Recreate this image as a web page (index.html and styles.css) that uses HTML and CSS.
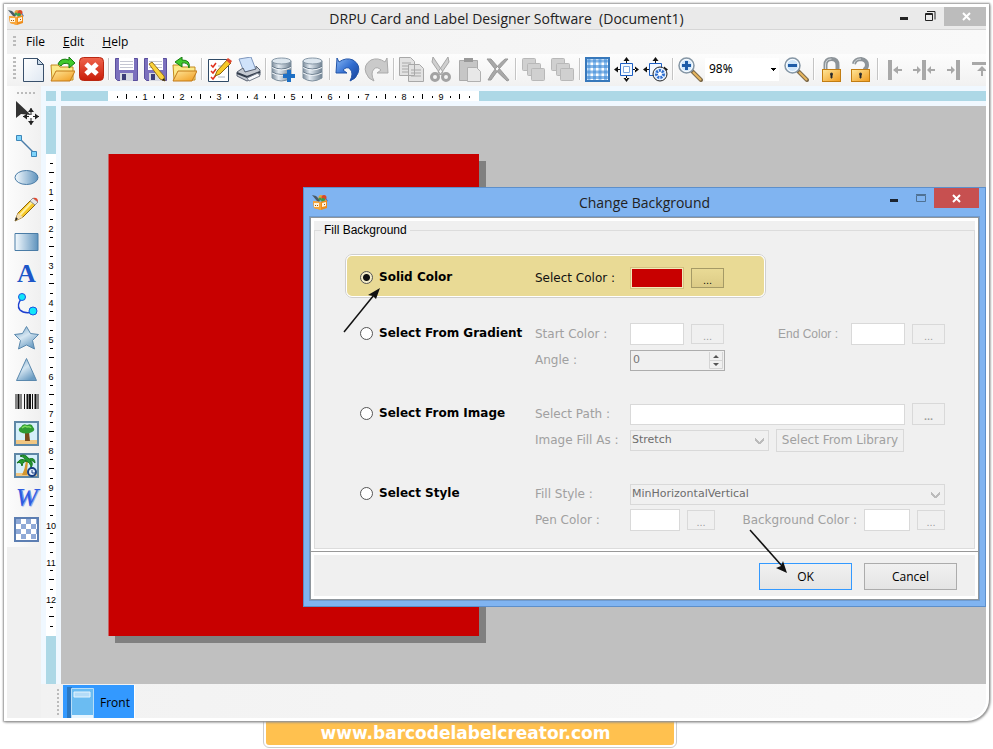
FILE: index.html
```html
<!DOCTYPE html>
<html lang="en">
<head>
<meta charset="utf-8">
<title>DRPU Card and Label Designer Software</title>
<link rel="stylesheet" href="styles.css">
</head>
<body>
<svg class="defs" width="0" height="0" aria-hidden="true">
  <defs>
    <linearGradient id="steel" x1="0" x2="1"><stop offset="0" stop-color="#f4fafe"/><stop offset="1" stop-color="#5f93bd"/></linearGradient>
    <linearGradient id="steelDown" x1="0" x2="0.6" y1="0" y2="1"><stop offset="0" stop-color="#6f9fc4"/><stop offset=".5" stop-color="#d5e6f2"/><stop offset="1" stop-color="#6b9cc2"/></linearGradient>
    <linearGradient id="gold" x1="0" x2="1" y1="0" y2="1"><stop offset="0" stop-color="#ffe79a"/><stop offset="1" stop-color="#f09a1c"/></linearGradient>
    <linearGradient id="red" x1="0" x2="0" y1="0" y2="1"><stop offset="0" stop-color="#f0644c"/><stop offset="1" stop-color="#c81c08"/></linearGradient>
    <linearGradient id="blue" x1="0" x2="1" y1="0" y2="1"><stop offset="0" stop-color="#8ab8f4"/><stop offset=".5" stop-color="#2f6cd0"/><stop offset="1" stop-color="#173f93"/></linearGradient>
    <linearGradient id="paper" x1="0" x2="1" y1="0" y2="1"><stop offset="0" stop-color="#fff"/><stop offset="1" stop-color="#dfe8f2"/></linearGradient>
    <linearGradient id="drum" x1="0" x2="1"><stop offset="0" stop-color="#7d8d9c"/><stop offset=".35" stop-color="#e3ebf2"/><stop offset="1" stop-color="#6f8192"/></linearGradient>
    <symbol id="app" viewBox="0 0 16 16">
      <path d="M0 1l4 1 4 4-1 2-2-1z" fill="#4a5a66"/><circle cx="9" cy="3.500" r="2.500" fill="#e8a13a"/><circle cx="8" cy="5" r="1.500" fill="#3f9c4c"/><circle cx="12" cy="3.500" r="2.500" fill="#d94a26"/><circle cx="11" cy="6" r="2" fill="#35a050"/><path d="M14 4l2 3-2 1z" fill="#3f78d0"/>
      <path d="M1 7l7 1 7-2v8l-6 2-7-2z" fill="#ee8d1d"/><path d="M1 7l8 1v8l-7-2z" fill="#f9a63a"/><path d="M2 9h5v4H2zM10 9l4-1v4l-4 1z" fill="#fff3dc"/><path d="M3 11h1v1H3zM5 11h1v1H5zM12 10h1v1h-1z" fill="#a35a12"/>
    </symbol>
    <symbol id="floppy" viewBox="0 0 25 25">
      <path d="M1.500 1.500h22v22h-20l-2-2z" fill="#7b70bd" stroke="#5a4f9d"/><path d="M5 1h15v12H5z" fill="#fff"/><path d="M6 4.500h13M6 7.500h13M6 10.500h13" stroke="#c4c6d2"/><path d="M6 16h13v8H6z" fill="#d7d9e2"/><path d="M8 17h4v6H8z" fill="#3c3c78"/>
    </symbol>
    <symbol id="folder" viewBox="0 0 25 25">
      <path d="M1 8h7l2 2h13v13H2z" fill="#fbe98a" stroke="#c48a1d"/><path d="M1 24l5-10h19l-5 10z" fill="url(#gold)" stroke="#c27a18"/>
    </symbol>
    <symbol id="pencil" viewBox="0 0 25 25">
      <path d="M1 24l3-8 14-14 5 4-14 14z" fill="#f7c928" stroke="#8a6412"/><path d="M6 18L19 4" stroke="#fff0a0" stroke-width="2"/><path d="M16 4l3-3 5 4-3 3z" fill="#e6e6e6" stroke="#8f8f8f"/><path d="M19 1q5-1 5 4z" fill="#e0472e"/><path d="M1 24l3-8 5 4z" fill="#f3ddb0"/><path d="M1 24l1-4 2 2z" fill="#222"/>
    </symbol>
    <symbol id="drumstack" viewBox="0 0 25 25">
      <path d="M3 4v17q9 6 19 0V4z" fill="url(#drum)" stroke="#7d8e9d"/><ellipse cx="12.500" cy="4" rx="9.500" ry="3" fill="#dce6ee" stroke="#8798a7"/><path d="M3 9.500q9 5 19 0M3 15q9 5 19 0" fill="none" stroke="#66798a"/><path d="M3 10.500q9 5 19 0M3 16q9 5 19 0" fill="none" stroke="#eef3f7"/>
    </symbol>
    <symbol id="stack" viewBox="0 0 25 25">
      <g fill="#d0d0d0" stroke="#b8b8b8"><rect x="1.500" y="1.500" width="13" height="12" rx="1"/><rect x="6.500" y="6.500" width="13" height="12" rx="1"/><rect x="10.500" y="11.500" width="13" height="12" rx="1"/></g>
    </symbol>
    <symbol id="lens" viewBox="0 0 25 25">
      <path d="M14 14l9 9" stroke="#7d6a4a" stroke-width="4" stroke-linecap="round"/><path d="M15 15l8 8" stroke="#e8b75e" stroke-width="2"/><circle cx="8.500" cy="8.500" r="7.500" fill="#cfe6fa" stroke="#8797a5" stroke-width="1.500"/><circle cx="8.500" cy="8.500" r="6" fill="none" stroke="#fff"/>
    </symbol>
    <symbol id="lockbody" viewBox="0 0 25 25">
      <rect x="3.500" y="12.500" width="18" height="12" fill="url(#gold)" stroke="#c27d12"/><circle cx="12.500" cy="17" r="1.500" fill="#333"/><path d="M12 17h1v4h-1z" stroke="#333"/>
    </symbol>
  </defs>
</svg>

<main class="window">
  <header class="titlebar">
    <svg class="app-icon" width="16" height="16"><use href="#app"/></svg>
    <h1>DRPU Card and Label Designer Software&nbsp; (Document1)</h1>
    <div class="window-controls">
      <button aria-label="Minimize"><svg width="24" height="19"><path d="M8 10h8v3H8z" fill="#222"/></svg></button>
      <button aria-label="Restore"><svg width="28" height="19"><path d="M9.500 6.500h7v7h-7zM9 7.500h8M11 4.500h8v8" fill="none" stroke="#222"/></svg></button>
      <button class="close" aria-label="Close"><svg width="42" height="19"><path d="M19 6l7 7M26 6l-7 7" stroke="#fff" stroke-width="2"/></svg></button>
    </div>
  </header>

  <nav class="menubar">
    <span class="grip"></span>
    <button>File</button><button><u>E</u>dit</button><button><u>H</u>elp</button>
  </nav>

  <div class="toolbar">
    <span class="grip"></span>
    <button aria-label="New"><svg><path d="M2.500 1.500h14l6 6v17h-20z" fill="url(#paper)" stroke="#39506b"/><path d="M16.500 1.500v6h6z" fill="#c8d8e8" stroke="#39506b"/></svg></button>
    <button aria-label="Open"><svg><use href="#folder"/><path d="M8 7q3-7 11-4V0l6 6-6 5V7q-6-2-8 2z" fill="#3fc92c" stroke="#187c12"/></svg></button>
    <button aria-label="Close document"><svg><rect x=".5" y=".5" width="24" height="23" rx="4" fill="url(#red)" stroke="#b92812"/><path d="M7 7l11 10M18 7L7 17" stroke="#fff" stroke-width="5"/></svg></button>
    <i class="sep"></i>
    <button aria-label="Save"><svg><use href="#floppy"/></svg></button>
    <button aria-label="Save as"><svg><use href="#floppy"/><path d="M6 7l3-2 12 14 1 5-5-2z" fill="#fbd33c" stroke="#94701a"/><path d="M22 24l-3-1 2-2z" fill="#222"/></svg></button>
    <button aria-label="Import"><svg><use href="#folder"/><path d="M17 11q-1-6-7-5v4L3 5l7-5v3q9 0 7 8z" fill="#3fc92c" stroke="#187c12"/></svg></button>
    <i class="sep"></i>
    <button aria-label="Properties"><svg><path d="M1.500 2.500h20v22h-20z" fill="#fff" stroke="#2f4a66"/><path d="M4 8l2 2 3-4M4 14l2 2 3-4M4 20l2 2 3-4" fill="none" stroke="#e0301c" stroke-width="1.500"/><path d="M11 9h7M11 20h7" stroke="#aab8c6"/><path d="M8 19l2-5L20 3l4 3-11 11z" fill="#f7c928" stroke="#8a6412"/><path d="M19 3l2-2 4 3-2 3z" fill="#e0472e"/></svg></button>
    <button aria-label="Print"><svg><path d="M3 2l12-2 5 13-12 2z" fill="#cfe2fa" stroke="#7d96bd"/><path d="M1 15l6-4 2 4 11-3v-3l4 4v5l-13 6-10-5z" fill="#c4c9d1" stroke="#596272"/><path d="M1 16l10 4 13-5" fill="none" stroke="#333d4c" stroke-width="2"/><path d="M11 21l11-5 2 3-11 5z" fill="#f6f8fb" stroke="#737c8a"/></svg></button>
    <i class="sep"></i>
    <button aria-label="Add data source"><svg><use href="#drumstack" x="-2"/><path d="M18 13v12M12 19h12" stroke="#1d6fc4" stroke-width="4"/></svg></button>
    <button aria-label="Data source"><svg><use href="#drumstack"/></svg></button>
    <i class="sep"></i>
    <button aria-label="Undo"><svg><path d="M2 1l2 4q7-5 14-2 8 5 5 13-2 6-8 8 4-8 0-12-3-3-7 1l4 3H1z" fill="url(#blue)" stroke="#2355a8"/></svg></button>
    <button aria-label="Redo" disabled><svg><path d="M23 1l-2 4q-7-5-14-2-8 5-5 13 2 6 8 8-4-8 0-12 3-3 7 1l-4 3h11z" fill="#cacaca" stroke="#aaa"/></svg></button>
    <i class="sep"></i>
    <button aria-label="Copy" disabled><svg><g fill="#e2e2e2" stroke="#a8a8a8"><path d="M.5.500h11l4 4v14H.5zM9.500 7.500h11l4 4v13h-15z"/><path d="M3 6h9M3 9h6M3 12h6M3 15h6M12 13h10M12 16h10M12 19h10"/></g></svg></button>
    <button aria-label="Cut" disabled><svg><path d="M5 0l10 15-2 3L4 5zM20 0L10 15l2 3 9-13z" fill="#cfcfcf" stroke="#a6a6a6"/><g fill="none" stroke="#a3a3a3" stroke-width="3"><circle cx="7" cy="20" r="3.500"/><circle cx="18" cy="20" r="3.500"/></g></svg></button>
    <button aria-label="Paste" disabled><svg><path d="M2.500 3.500h18v20h-18z" fill="#c6c6c6" stroke="#aaa"/><path d="M7 1h9v4H7z" fill="#999"/><path d="M10.500 10.500h9l4 4v10h-13z" fill="#e8e8e8" stroke="#b0b0b0"/></svg></button>
    <button aria-label="Delete" disabled><svg><path d="M1 2h4q8 9 18 21l-2 1Q11 16 1 2zM22 2h-3Q9 10 2 23h3Q12 12 22 2z" fill="#a8a8a8" stroke="#999"/></svg></button>
    <i class="sep"></i>
    <button aria-label="Bring to front" disabled><svg><use href="#stack"/></svg></button>
    <button aria-label="Send to back" disabled><svg><use href="#stack"/></svg></button>
    <i class="sep"></i>
    <button aria-label="Grid"><svg><path d="M1 1h23v23H1z" fill="#fff" stroke="#3978bb" stroke-width="2"/><path d="M4 2v21M9.500 2v21M15 2v21M20.500 2v21" stroke="#4d9be6" stroke-width="3" opacity=".6"/><path d="M2 4h21M2 9.500h21M2 15h21M2 20.500h21" stroke="#3a86d4" stroke-width="3" opacity=".6"/></svg></button>
    <button aria-label="Center"><svg><path d="M6.500 6.500h12v12h-12z" fill="#f4f9ff" stroke="#1d5fc4"/><path d="M9.500 9.500h6v6h-6z" fill="#fff" stroke="#7aa7e0"/><path d="M12.500 0l3 4h-6zM12.500 25l3-4h-6zM0 12.500l4-3v6zM25 12.500l-4-3v6zM12 3h1v3h-1zM12 19h1v3h-1zM3 12h3v1H3zM19 12h3v1h-3z" fill="#111"/></svg></button>
    <button aria-label="Center settings"><svg><path d="M6.500 6.500h12v12h-12z" fill="#f4f9ff" stroke="#1d5fc4"/><path d="M12.500 0l3 4h-6zM0 12.500l4-3v6zM25 12.500l-4-3v6zM12 3h1v3h-1zM3 12h3v1H3z" fill="#111"/><circle cx="17" cy="17" r="7" fill="#e4f0ff" stroke="#222"/><circle cx="17" cy="17" r="3.500" fill="#fff" stroke="#2d6ed0" stroke-width="3" stroke-dasharray="2 1"/></svg></button>
    <i class="sep"></i>
    <button aria-label="Zoom in"><svg><use href="#lens"/><path d="M8.500 4v9M4 8.500h9" stroke="#1e5ca8" stroke-width="3"/></svg></button>
    <select class="zoom" aria-label="Zoom"><option>98%</option></select>
    <button aria-label="Zoom out"><svg><use href="#lens"/><path d="M4 8.500h9" stroke="#1e5ca8" stroke-width="3"/></svg></button>
    <i class="sep"></i>
    <button aria-label="Lock"><svg><path d="M6.500 13V8q0-6 6-6t6 6v5" fill="none" stroke="#8d9499" stroke-width="4"/><path d="M6.500 13V8q0-6 6-6" fill="none" stroke="#d5dadd"/><use href="#lockbody"/></svg></button>
    <button aria-label="Unlock"><svg><path d="M6 7q1-5 7-5 6 1 6 6 0 3-3 5" fill="none" stroke="#8d9499" stroke-width="4"/><path d="M6 7q1-5 7-5" fill="none" stroke="#d5dadd"/><use href="#lockbody"/></svg></button>
    <i class="sep"></i>
    <button aria-label="Align left" disabled><svg><path d="M5 3h4v20H5zM10 13l5-4v3h4v2h-4v3z" fill="#a8a8a8"/></svg></button>
    <button aria-label="Align center" disabled><svg><path d="M10 3h4v20h-4zM9 13L5 9v3H1v2h4v3zM15 13l4-4v3h4v2h-4v3z" fill="#a8a8a8"/></svg></button>
    <button aria-label="Align right" disabled><svg><path d="M15 3h4v20h-4zM14 13l-4-4v3H6v2h4v3z" fill="#a8a8a8"/></svg></button>
    <button aria-label="Align top" disabled><svg><path d="M2 5h20v3H2zM12 9l-5 5h4v5h2v-5h4z" fill="#a8a8a8"/></svg></button>
  </div>

  <div class="workspace">
    <aside class="tools">
      <span class="grip-h"></span>
      <button aria-label="Select"><svg><path d="M2 0v17l5-4 10 1z" fill="#333"/><path d="M17 7v17M9 15.500h16" stroke="#222"/><path d="M17 7l3 4h-6zM17 24l3-4h-6zM9 15.500l4-3v6zM25 15.500l-4-3v6z" fill="#222"/><path d="M15 14h4v3h-4z" fill="#fff"/></svg></button>
      <button aria-label="Line"><svg><path d="M5 5l16 16" stroke="#4b7ca8" stroke-width="1.500"/><path d="M2.500 2.500h5v5h-5zM17.500 18.500h5v5h-5z" fill="#7fd4fb" stroke="#3d86b8"/></svg></button>
      <button aria-label="Ellipse"><svg><ellipse cx="12.500" cy="12.500" rx="11.500" ry="7" fill="url(#steel)" stroke="#4a7ca6"/></svg></button>
      <button aria-label="Pencil"><svg><use href="#pencil"/></svg></button>
      <button aria-label="Rectangle"><svg><path d="M1 4.500h23v17H1z" fill="url(#steel)" stroke="#4a7ca6"/></svg></button>
      <button class="glyph" aria-label="Text">A</button>
      <button aria-label="Curve"><svg><path d="M8 5q-6 7-2 12 4 4 13 2" fill="none" stroke="#1d3fd0" stroke-width="1.500"/><circle cx="8" cy="4" r="3.500" fill="#12e6f8" stroke="#1a54e0"/><circle cx="19" cy="18" r="4" fill="#12e6f8" stroke="#1a54e0"/></svg></button>
      <button aria-label="Star"><svg><path d="M12.500 1.500l4 7 8 1-6 6 2 8.500-8-4-8 4 2-8.500-6-6 8-1z" fill="url(#steelDown)" stroke="#5a88ad"/></svg></button>
      <button aria-label="Triangle"><svg><path d="M12.500 1.500l10 22h-20z" fill="url(#steelDown)" stroke="#5a88ad"/></svg></button>
      <button aria-label="Barcode"><svg><path d="M2 5v15M7 5v15M10.500 5v15M18.500 5v15M24 5v15" stroke="#111"/><path d="M4.500 5v15M13.500 5v15M16 5v15M21.500 5v15" stroke="#111" stroke-width="2"/></svg></button>
      <button aria-label="Picture"><svg><path d="M1 1h23v23H1z" fill="#d5effa" stroke="#5e87a6" stroke-width="2"/><path d="M2 19h21v4H2z" fill="#f0c682"/><path d="M11 11h4l1 9h-5z" fill="#7a4a1c"/><path d="M6 11q-3-3 1-5 2-4 6-2 5-2 6 2 3 3-1 5-6 3-12 0z" fill="#2e9a34"/><path d="M8 7q3-3 5-1 3-1 4 1" fill="none" stroke="#7ddc5c" stroke-width="1.500"/></svg></button>
      <button aria-label="Picture library"><svg><path d="M1 1h23v23H1z" fill="#d5effa" stroke="#5e87a6" stroke-width="2"/><path d="M2 20h21v3H2z" fill="#f0c682"/><path d="M12 8q-1 8-4 14h5q0-6 1-14z" fill="#d4962e"/><path d="M12 8Q7 4 3 10q4-2 5 3 0-4 4-5 5 2 5 7 3-6-1-7 3-1 5 2 0-6-6-4-4-6-9-3 4 0 6 5z" fill="#249a2e" stroke="#14721e"/><circle cx="18" cy="19" r="4" fill="#e8f1ff" stroke="#173d82" stroke-width="2"/><path d="M18 17v3h3" fill="none" stroke="#173d82"/></svg></button>
      <button class="glyph glyph-art" aria-label="Word art">W</button>
      <button aria-label="Watermark"><svg><path d="M1 1h23v23H1z" fill="#fff" stroke="#5c7eb2" stroke-width="2"/><path d="M2 4.500h21M2 14.500h21" stroke="#8fa9d6" stroke-width="5" stroke-dasharray="5"/><path d="M7 9.500h16M7 19.500h16" stroke="#8fa9d6" stroke-width="5" stroke-dasharray="5"/></svg></button>
    </aside>

    <span class="ruler-corner"></span>
    <div class="ruler ruler-x">
      <span class="ruler-lead"></span>
      <svg width="371" height="10">
        <pattern id="tx" width="37" height="10" patternUnits="userSpaceOnUse"><path d="M9 5h1v2H9zM18 3h1v5h-1zM28 5h1v2h-1z"/></pattern>
        <rect width="371" height="10" fill="url(#tx)"/>
        <g text-anchor="middle"><text x="37" y="9">1</text><text x="74" y="9">2</text><text x="111" y="9">3</text><text x="148" y="9">4</text><text x="185" y="9">5</text><text x="222" y="9">6</text><text x="259" y="9">7</text><text x="296" y="9">8</text><text x="333" y="9">9</text></g>
      </svg>
      <span class="ruler-rest"></span>
    </div>
    <div class="ruler ruler-y">
      <span class="ruler-lead"></span>
      <svg width="10" height="482">
        <pattern id="ty" width="10" height="37" patternUnits="userSpaceOnUse"><path d="M4 9h3v1H4zM3 18h5v1H3zM4 28h3v1H4z"/></pattern>
        <rect width="10" height="482" fill="url(#ty)"/>
        <g text-anchor="middle"><text x="5" y="41">1</text><text x="5" y="78">2</text><text x="5" y="115">3</text><text x="5" y="152">4</text><text x="5" y="189">5</text><text x="5" y="226">6</text><text x="5" y="263">7</text><text x="5" y="300">8</text><text x="5" y="337">9</text><text x="5" y="375">10</text><text x="5" y="412">11</text><text x="5" y="449">12</text></g>
      </svg>
      <span class="ruler-rest"></span>
    </div>

    <section class="canvas">
      <div class="artboard"></div>

      <form class="dialog" role="dialog" aria-labelledby="dialog-title">
        <header class="dialog-title">
          <svg class="app-icon" width="16" height="16"><use href="#app"/></svg>
          <h2 id="dialog-title">Change Background</h2>
          <div class="window-controls">
            <button type="button" aria-label="Minimize"><svg width="24" height="20"><path d="M8 11h8v3H8z" fill="#1c2430"/></svg></button>
            <button type="button" aria-label="Maximize"><svg width="28" height="20"><path d="M10.500 7.500h9v6h-9zM10 6.500h10" fill="none" stroke="#4f7193"/></svg></button>
            <button type="button" class="close close-red" aria-label="Close"><svg width="45" height="20"><path d="M19 7l7 7M26 7l-7 7" stroke="#fff" stroke-width="2"/></svg></button>
          </div>
        </header>
        <div class="client">
          <div class="sheet">
          <fieldset class="panel">
            <legend>Fill Background</legend>

            <div class="option option-active">
              <label class="choice"><input type="radio" name="fill" checked>Solid Color</label>
              <div class="fields">
                <div class="field">
                  <label for="solid">Select Color :</label>
                  <input id="solid" class="swatch swatch-red" readonly>
                  <button type="button" class="more">...</button>
                </div>
              </div>
            </div>

            <div class="option">
              <label class="choice"><input type="radio" name="fill">Select From Gradient</label>
              <div class="fields">
                <div class="field">
                  <label for="start">Start Color :</label>
                  <input id="start" class="swatch" disabled>
                  <button type="button" class="more" disabled>...</button>
                  <label for="end" class="second sans">End Color :</label>
                  <input id="end" class="swatch" disabled>
                  <button type="button" class="more" disabled>...</button>
                </div>
                <div class="field">
                  <label for="angle">Angle :</label>
                  <span class="spinner">
                    <input id="angle" value="0" disabled>
                    <svg width="14" height="17"><path d="M.5 0v16.500h13V0M0 8.500h14" fill="none" stroke="#d4d4d4"/><path d="M4 6l3-3 3 3zM4 11l3 3 3-3z" fill="#555"/></svg>
                  </span>
                </div>
              </div>
            </div>

            <div class="option">
              <label class="choice"><input type="radio" name="fill">Select From Image</label>
              <div class="fields">
                <div class="field">
                  <label for="path">Select Path :</label>
                  <input id="path" class="path" disabled>
                  <button type="button" class="more more-bold" disabled>...</button>
                </div>
                <div class="field">
                  <label for="fillas">Image Fill As :</label>
                  <select id="fillas" class="short" disabled><option>Stretch</option></select>
                  <button type="button" class="library" disabled>Select From Library</button>
                </div>
              </div>
            </div>

            <div class="option">
              <label class="choice"><input type="radio" name="fill">Select Style</label>
              <div class="fields">
                <div class="field">
                  <label for="style">Fill Style :</label>
                  <select id="style" disabled><option>MinHorizontalVertical</option></select>
                </div>
                <div class="field">
                  <label for="pen">Pen Color :</label>
                  <input id="pen" class="swatch swatch-pen" disabled>
                  <button type="button" class="more more-small" disabled>...</button>
                  <label for="back" class="second">Background Color :</label>
                  <input id="back" class="swatch swatch-small" disabled>
                  <button type="button" class="more more-small" disabled>...</button>
                </div>
              </div>
            </div>
          </fieldset>
          </div>
          <footer class="actions">
            <button type="submit" class="primary">OK</button>
            <button type="button">Cancel</button>
          </footer>
        </div>
        <svg class="pointer pointer-solid" width="40" height="48"><path d="M2 46L32 9" stroke="#111" stroke-width="1.500"/><path d="M38 2l-4 11-3-3-5-1z" fill="#111"/></svg>
        <svg class="pointer pointer-ok" width="42" height="48"><path d="M2 2l32 36" stroke="#111" stroke-width="1.500"/><path d="M39 45l-11-5 5-2 2-5z" fill="#111"/></svg>
      </form>
    </section>

    <footer class="pages">
      <span class="grip"></span>
      <button class="page-tab">
        <svg width="28" height="31"><path d="M0 0h5v31H0z" fill="#2b78c2"/><path d="M4.500 1.500h22v30h-22z" fill="#6bbcf2" stroke="#b8def8"/><path d="M7 5h16v5H7z" fill="#b4dcf8" stroke="#e4f3fd"/><path d="M5 28h21v3H5z" fill="#e8f5fe"/></svg>
        Front
      </button>
    </footer>
  </div>
</main>
<a class="banner" href="http://www.barcodelabelcreator.com">www.barcodelabelcreator.com</a>
</body>
</html>
```
FILE: styles.css
```css
* { box-sizing: border-box; }

body {
  margin: 0;
  min-height: 100vh;
  display: flex;
  flex-direction: column;
  background: #fff;
  font: 12px/16px "Open Sans", "Noto Sans", sans-serif;
  color: #000;
}

h1, h2 { margin: 0; font-weight: 400; text-align: center; }
button, input, select { font: inherit; color: inherit; margin: 0; padding: 0; border: 0; border-radius: 0; background: none; }
svg { display: block; flex: none; }
.defs { position: absolute; }

.window {
  flex: 1;
  display: flex;
  flex-direction: column;
  margin: 4px 4px 0;
  border: 3px solid #fff;
  border-bottom-right-radius: 22px;
  box-shadow: 0 0 2px 1px #999, 1px 1px 3px #888;
  background: #f0f0f0;
  overflow: hidden;
  position: relative;
  z-index: 1;
}

.titlebar {
  display: grid;
  grid-template-columns: 116px 1fr 96px;
  height: 23px;
  background: #eaeaea;
  border-bottom: 1px solid #d6d6d6;
}
.titlebar h1 { font-size: 14px; line-height: 23px; color: #222; white-space: nowrap; }
.app-icon { margin: 2px 1px; }
.window-controls { display: flex; justify-content: flex-end; align-items: flex-start; }
.close { background: #bcbcbc; }
.close-red { background: #c75050; }

.grip { width: 3px; height: 18px; background: repeating-linear-gradient(#bbb 0 2px, transparent 2px 4px); flex: none; }
.grip-h { width: 19px; height: 2px; margin: 6px 0 4px; background: repeating-linear-gradient(90deg, #bbb 0 2px, transparent 2px 4px); flex: none; }

.menubar {
  display: flex;
  align-items: center;
  height: 24px;
  padding-left: 6px;
  background: linear-gradient(90deg, #f1f1f1, #f9f9f9);
}
.menubar .grip { height: 12px; }
.menubar button { padding: 0 9px; }
.menubar .grip + button { padding-left: 10px; }

.toolbar {
  display: flex;
  align-items: center;
  height: 32px;
  padding: 0 0 2px 6px;
  overflow: hidden;
  background: linear-gradient(#fdfdfd, #f1f1f1);
}
.toolbar .grip { height: 24px; margin-right: 3px; }
.toolbar button { flex: none; width: 29px; height: 25px; padding: 0 2px; }
.toolbar svg { width: 25px; height: 25px; }
.sep { flex: none; width: 2px; height: 22px; margin: 0 2px; border-left: 1px solid #c4c4c4; border-right: 1px solid #fff; }
.zoom {
  flex: none;
  appearance: none;
  width: 74px;
  height: 23px;
  margin-right: 3px;
  padding-left: 4px;
  font-family: "Noto Sans", sans-serif;
  background: linear-gradient(#000, #000) no-repeat right 5px top 12px / 1px 1px, linear-gradient(#000, #000) no-repeat right 4px top 11px / 3px 1px, linear-gradient(#000, #000) no-repeat right 3px top 10px / 5px 1px, #fff;
}

.workspace {
  flex: 1;
  display: grid;
  grid-template-columns: 34px 20px 1fr;
  grid-template-rows: 20px 1fr 34px;
  background: #f0f8ff;
}
.tools {
  grid-row: 1 / 4;
  display: flex;
  flex-direction: column;
  align-items: center;
  padding-right: 1px;
  padding-left: 6px;
  background: linear-gradient(90deg, #fcfcfc, #f0f0f0) no-repeat top / 100% 461px, #f0f0f0;
}
.tools button { width: 25px; height: 32px; padding: 3px 0 4px; flex: none; }
.tools svg { width: 25px; height: 25px; }
.tools .glyph { padding: 0; font: bold 26px/32px "Liberation Serif", serif; color: #1c56c8; }
.tools .glyph-art { font-style: italic; font-weight: 400; color: #2f5be0; text-shadow: 1px 1px 1px #9fb4f0, 1px 0 0 #2f5be0; }

.ruler-corner { margin: 5px; background: #add8e6; }
.ruler { display: flex; font: 9px "Liberation Sans", sans-serif; }
.ruler svg { background: #fff; overflow: visible; }
.ruler-lead, .ruler-rest { background: #add8e6; }
.ruler-rest { flex: 1; }
.ruler-x { padding: 5px 0; }
.ruler-x .ruler-lead { width: 47px; }
.ruler-y { flex-direction: column; padding: 0 5px; }
.ruler-y .ruler-lead { height: 48px; }

.canvas { position: relative; padding: 48px 47px; background: #c0c0c0; }
.artboard { width: 371px; height: 482px; background: #c80000; border-left: 1px solid #c86464; box-shadow: 7px 7px 0 #808080; }

.pages {
  grid-column: 2 / 4;
  display: flex;
  align-items: flex-start;
  padding: 1px 0 0 16px;
  background: linear-gradient(90deg, #f2f2f2, #f8f8f8);
}
.pages .grip { height: 26px; margin: 4px 4px 0 0; width: 2px; }
.page-tab { display: flex; align-items: center; gap: 5px; height: 33px; padding: 2px 4px 0 4px; background: #39f; border-right: 1px solid #fff; }

.dialog {
  position: absolute;
  top: 81px;
  left: 242px;
  right: 0;
  padding: 0 6px 6px;
  border: 1px solid #5d8fca;
  background: #80b4f1;
}
.dialog-title { display: grid; grid-template-columns: 97px 1fr 97px; height: 29px; }
.dialog-title h2 { font-size: 14px; line-height: 29px; color: #222; }
.dialog-title .app-icon { margin: 6px 2px; }

.client { border: 1px solid #8f969c; outline: 1px solid #6f9bd0; background: #fff; padding-top: 3px; }
.sheet { margin: 0 3px; padding-top: 1px; background: #f0f0f0; }
.panel {
  min-width: 0;
  margin: 0;
  padding: 0 29px 17px 30px;
  border: 1px solid #dcdcdc;
}
.panel legend { margin-left: -24px; padding: 0 3px; font: 12px/16px "Liberation Sans", sans-serif; }

.option {
  display: grid;
  grid-template-columns: 175px 1fr;
  align-items: start;
  margin: 32px 0 0 15px;
  font: 12px/16px "DejaVu Sans", Verdana, sans-serif;
}
.option-active {
  width: 421px;
  margin: 16px 0 0;
  padding: 11px 13px 7px;
  border: 2px solid #fff;
  border-radius: 7px;
  outline: 1px solid #cfcfcf;
  outline-offset: -1px;
  background: #e9da95;
}
.option-active + .option { margin-top: 25px; }
.choice { display: flex; align-items: center; gap: 6px; height: 20px; font-weight: 700; white-space: nowrap; }
.choice input {
  appearance: none;
  width: 13px;
  height: 13px;
  border: 1px solid #555;
  border-radius: 50%;
  background: #fff;
}
.choice input:checked { background: radial-gradient(#111 0 3px, #f4ecc8 4px); }
.fields { display: flex; flex-direction: column; gap: 4px; min-width: 0; }
.field { display: flex; align-items: center; height: 22px; gap: 7px; color: #a0a0a0; }
.option-active .field { color: #111; }
.field > label { width: 88px; white-space: nowrap; }
.field > .second { width: auto; margin-left: auto; }
.field > .sans { font-family: "Liberation Sans", sans-serif; padding-right: 6px; }
.swatch { width: 54px; height: 22px; background: #fff; border: 1px solid #d9d9d9; }
.swatch-red { background: #c80000; border: 1px solid #d3c27f; box-shadow: inset 0 0 0 1px #f3e9b8; }
.swatch-pen { width: 50px; }
.swatch-small { width: 46px; }
.more { width: 33px; height: 20px; padding-top: 3px; border: 1px solid #d9d9d9; font-family: "Liberation Sans", sans-serif; font-size: 11px; line-height: 14px; }
.option-active .more { border-color: #a59a66; background: linear-gradient(#e9da95, #dccb86); }
.more-bold { height: 22px; font-weight: 700; }
.more-small { width: 28px; }
.spinner { display: flex; width: 95px; height: 21px; border: 1px solid #adadad; padding: 1px; }
.spinner input { flex: 1; min-width: 0; padding-left: 1px; color: #777; font-size: 11px; }
.path { flex: 1; min-width: 0; height: 21px; background: #fff; border: 1px solid #d9d9d9; }
.field select {
  flex: 1;
  min-width: 0;
  appearance: none;
  height: 21px;
  padding-left: 1px;
  color: #6d6d6d;
  opacity: 1;
  font-size: 11px;
  border: 1px solid #d9d9d9;
  background: linear-gradient(45deg, transparent 35%, #bbb 35% 60%, transparent 60%) no-repeat right 8px top 7px / 5px 6px, linear-gradient(-45deg, transparent 35%, #bbb 35% 60%, transparent 60%) no-repeat right 4px top 7px / 5px 6px;
}
.field .short { flex: 0 0 139px; }
.library { height: 23px; width: 128px; border: 1px solid #d9d9d9; }

.actions {
  display: flex;
  justify-content: flex-end;
  gap: 12px;
  margin-top: 3px;
  padding: 8px 18px 6px;
  border: 3px solid #fff;
  background: #f0f0f0;
  box-shadow: 0 -1px 0 #999;
}
.actions button { width: 93px; height: 27px; border: 1px solid #acacac; background: linear-gradient(#f1f1f1, #e4e4e4); }
.actions .primary { border-color: #39f; }

.pointer { position: absolute; pointer-events: none; }
.pointer-solid { left: 38px; top: 98px; }
.pointer-ok { left: 444px; top: 340px; }

.banner {
  align-self: center;
  width: 412px;
  height: 26px;
  margin: 0 54px 2px 0;
  border: 2px solid #fff;
  border-top: 0;
  border-radius: 0 0 5px 5px;
  outline: 1px solid #ccc;
  background: #ffc14f;
  color: #fff;
  font: bold 17px/24px "DejaVu Sans", Verdana, sans-serif;
  padding-right: 8px;
  text-align: center;
  text-decoration: none;
}
```
